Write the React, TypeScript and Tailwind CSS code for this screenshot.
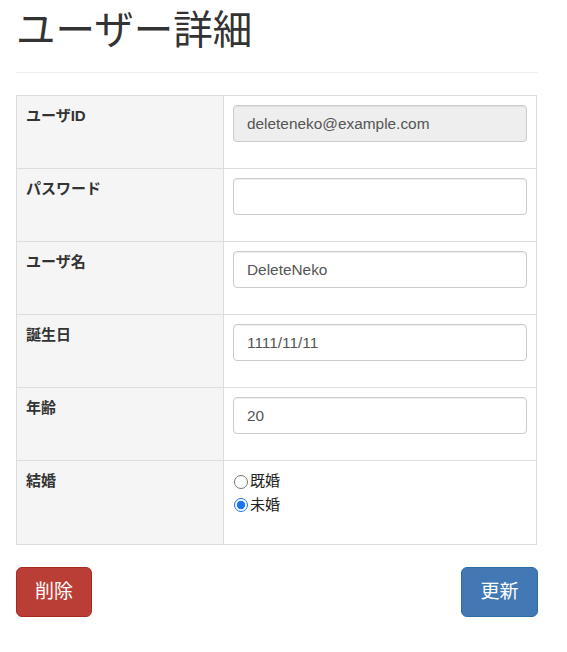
import React from "react";

const rows: { label: string; value?: string; disabled?: boolean }[] = [
  { label: "ユーザID", value: "deleteneko@example.com", disabled: true },
  { label: "パスワード", value: "" },
  { label: "ユーザ名", value: "DeleteNeko" },
  { label: "誕生日", value: "1111/11/11" },
  { label: "年齢", value: "20" },
];

export default function App() {
  return (
    <div className="min-h-[652px] bg-white text-[#333] font-['Liberation_Sans','Noto_Sans_CJK_JP',sans-serif]">
      <div className="ml-[16px] w-[522px] pt-[9px]">
        <h1 className="text-[39.5px] leading-[42px] font-normal text-[#333]">ユーザー詳細</h1>
        <div className="mt-[21px] h-px bg-[#eee]" />
        <div className="mt-[22px] w-[521px] border border-[#ddd]">
          {rows.map((r) => (
            <div key={r.label} className="flex border-b border-[#ddd]">
              <div className="w-[207px] shrink-0 border-r border-[#ddd] bg-[#f5f5f5] pl-[9px] pt-[9px] text-[15px] leading-[21px] font-bold">
                {r.label}
              </div>
              <div className="flex-1 px-[9px] pt-[9px] pb-[26px]">
                <input
                  type={r.label === "パスワード" ? "password" : "text"}
                  readOnly
                  disabled={r.disabled}
                  value={r.value}
                  className={
                    r.disabled
                      ? "block h-[37px] w-full rounded-[4px] border border-[#ccc] bg-[#eee] px-[13px] text-[15.4px] text-[#555] shadow-[inset_0_1px_1px_rgba(0,0,0,0.075)] outline-none opacity-100"
                      : "block h-[37px] w-full rounded-[4px] border border-[#ccc] bg-white px-[13px] text-[15.4px] text-[#555] shadow-[inset_0_1px_1px_rgba(0,0,0,0.075)] outline-none"
                  }
                />
              </div>
            </div>
          ))}
          <div className="flex">
            <div className="w-[207px] shrink-0 border-r border-[#ddd] bg-[#f5f5f5] pl-[9px] pt-[9px] text-[15px] leading-[21px] font-bold">
              結婚
            </div>
            <div className="flex-1 h-[83px] px-[9px] pt-[9px]">
              <label className="flex h-[23px] items-center text-[15px] text-[#222]">
                <input type="radio" name="marriage" className="m-0 ml-px mr-[2px] h-[14px] w-[14px]" />
                既婚
              </label>
              <label className="flex h-[24px] items-center text-[15px] text-[#222]">
                <input type="radio" name="marriage" defaultChecked className="m-0 ml-px mr-[2px] h-[14px] w-[14px] accent-[#1a73f0]" />
                未婚
              </label>
            </div>
          </div>
        </div>
        <div className="mt-[22px] flex justify-between">
          <button className="flex h-[50px] w-[76px] items-center justify-center rounded-[6px] border border-[#a52a22] bg-[#bb3e36] text-[19px] text-white">
            削除
          </button>
          <button className="flex h-[50px] w-[77px] items-center justify-center rounded-[6px] border border-[#2e6da4] bg-[#4279b4] text-[19px] text-white">
            更新
          </button>
        </div>
      </div>
    </div>
  );
}
